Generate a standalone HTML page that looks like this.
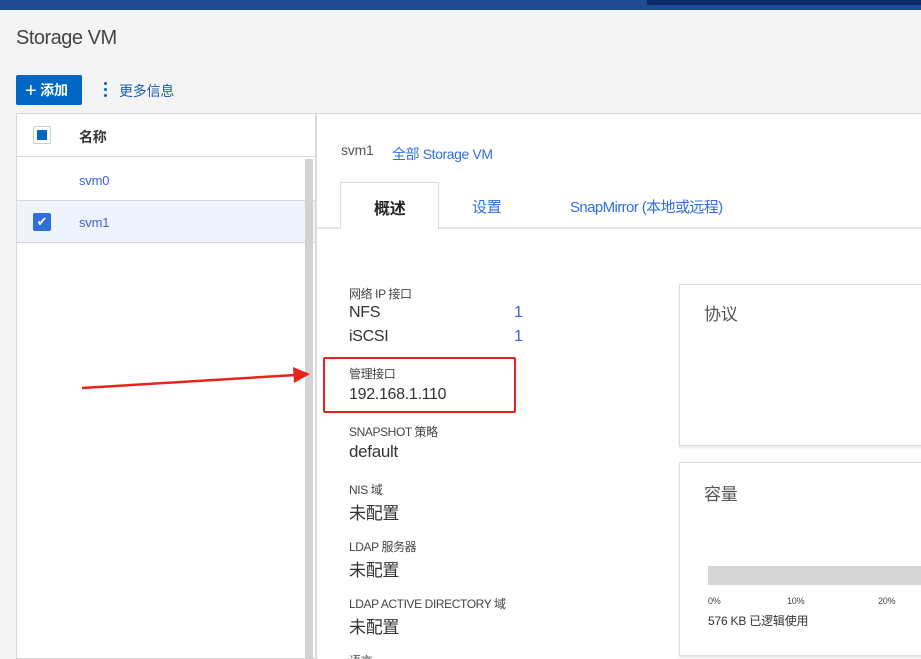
<!DOCTYPE html>
<html><head><meta charset="utf-8"><style>
*{margin:0;padding:0;box-sizing:border-box}
html{height:659px;overflow:hidden}
body{width:921px;height:659px;overflow:hidden;background:#f4f4f4;font-family:"Liberation Sans","Noto Sans CJK SC",sans-serif;position:relative;color:#333;letter-spacing:-0.2px}
.a{position:absolute;white-space:nowrap}
.lbl{font-size:12px;color:#444;letter-spacing:-0.4px}
.val{font-size:16px;color:#333;letter-spacing:-0.3px}
</style></head><body>
<div class="a" style="left:0;top:0;width:921px;height:10px;background:#1f4b91"></div>
<div class="a" style="left:647px;top:0;width:274px;height:5px;background:#0b2a6b"></div>
<div class="a" style="left:16px;top:27px;font-size:20px;color:#444;letter-spacing:-0.5px">Storage VM</div>
<div class="a" style="left:16px;top:75px;width:66px;height:30px;background:#0067c5;border-radius:2px;color:#fff;font-size:14px;font-weight:bold;line-height:30px;padding-left:9px"><span style="font-size:20px;font-weight:normal;vertical-align:-2px">+</span> 添加</div>
<div class="a" style="left:104px;top:82px;width:4px;height:16px">
<div style="width:3px;height:3px;border-radius:50%;background:#0067c5;margin-bottom:3px"></div><div style="width:3px;height:3px;border-radius:50%;background:#0067c5;margin-bottom:3px"></div><div style="width:3px;height:3px;border-radius:50%;background:#0067c5"></div></div>
<div class="a" style="left:119px;top:81px;font-size:14px;color:#1a5fb4">更多信息</div>

<div class="a" style="left:16px;top:113px;width:300px;height:546px;background:#fff;border:1px solid #d8d8d8"></div>
<div class="a" style="left:17px;top:156px;width:298px;height:1px;background:#d8d8d8"></div>
<div class="a" style="left:33px;top:126px;width:18px;height:18px;border:1px solid #ccc;border-radius:2px;background:#fff"></div>
<div class="a" style="left:37px;top:130px;width:10px;height:10px;background:#0067c5"></div>
<div class="a" style="left:79px;top:127px;font-size:14px;font-weight:bold;color:#333">名称</div>
<div class="a" style="left:79px;top:173px;font-size:13px;color:#3d63d6">svm0</div>
<div class="a" style="left:17px;top:200px;width:298px;height:43px;background:#eef3fc;border-top:1px solid #d8d8d8;border-bottom:1px solid #d8d8d8"></div>
<div class="a" style="left:33px;top:213px;width:18px;height:18px;background:#2f6fdc;border-radius:2px;color:#fff;font-size:13px;text-align:center;line-height:18px">✔</div>
<div class="a" style="left:79px;top:215px;font-size:13px;color:#3d63d6">svm1</div>
<div class="a" style="left:305px;top:159px;width:8px;height:500px;background:#d2d2d2"></div>

<div class="a" style="left:316px;top:113px;width:605px;height:546px;background:#fff;border-top:1px solid #d8d8d8;border-left:1px solid #e0e0e0"></div>
<div class="a" style="left:341px;top:142px;font-size:14px;color:#555">svm1</div>
<div class="a" style="left:392px;top:144px;font-size:14px;color:#2f6fdc;letter-spacing:-0.4px">全部 Storage VM</div>
<div class="a" style="left:316px;top:227px;width:605px;height:2px;background:#e4e4e4"></div>
<div class="a" style="left:340px;top:182px;width:99px;height:47px;background:#fff;border:1px solid #ddd;border-bottom:none"></div>
<div class="a" style="left:374px;top:195px;font-size:16px;font-weight:bold;color:#222">概述</div>
<div class="a" style="left:472px;top:196px;font-size:15px;color:#2f6fdc">设置</div>
<div class="a" style="left:570px;top:196px;font-size:15px;color:#2f6fdc;letter-spacing:-0.6px">SnapMirror (本地或远程)</div>

<div class="a lbl" style="left:349px;top:285px">网络 IP 接口</div>
<div class="a val" style="left:349px;top:304px">NFS</div><div class="a val" style="left:514px;top:304px;color:#3d63d6">1</div>
<div class="a val" style="left:349px;top:328px">iSCSI</div><div class="a val" style="left:514px;top:328px;color:#3d63d6">1</div>
<div class="a lbl" style="left:349px;top:365px">管理接口</div>
<div class="a val" style="left:349px;top:386px">192.168.1.110</div>
<div class="a" style="left:323px;top:357px;width:193px;height:56px;border:2px solid #e8231d;border-radius:2px"></div>
<div class="a lbl" style="left:349px;top:423px">SNAPSHOT 策略</div>
<div class="a val" style="left:349px;top:442px;font-size:17px">default</div>
<div class="a lbl" style="left:349px;top:481px">NIS 域</div>
<div class="a val" style="left:349px;top:499px;font-size:17px">未配置</div>
<div class="a lbl" style="left:349px;top:538px">LDAP 服务器</div>
<div class="a val" style="left:349px;top:556px;font-size:17px">未配置</div>
<div class="a lbl" style="left:349px;top:595px">LDAP ACTIVE DIRECTORY 域</div>
<div class="a val" style="left:349px;top:613px;font-size:17px">未配置</div>
<div class="a lbl" style="left:349px;top:652px">语言</div>

<div class="a" style="left:679px;top:284px;width:250px;height:162px;border:1px solid #ddd;box-shadow:0 2px 2px #e6e6e6;background:#fff"></div>
<div class="a" style="left:704px;top:300px;font-size:17px;color:#555">协议</div>
<div class="a" style="left:679px;top:462px;width:250px;height:194px;border:1px solid #ddd;box-shadow:0 2px 2px #e6e6e6;background:#fff"></div>
<div class="a" style="left:704px;top:480px;font-size:17px;color:#555">容量</div>
<div class="a" style="left:708px;top:566px;width:213px;height:19px;background:#d6d6d6"></div>
<div class="a" style="left:708px;top:596px;font-size:9px;color:#444">0%</div>
<div class="a" style="left:787px;top:596px;font-size:9px;color:#444">10%</div>
<div class="a" style="left:878px;top:596px;font-size:9px;color:#444">20%</div>
<div class="a" style="left:708px;top:612px;font-size:12px;color:#333">576 KB 已逻辑使用</div>

<svg class="a" style="left:0;top:0" width="921" height="659"><line x1="82" y1="388" x2="296" y2="375" stroke="#e8231d" stroke-width="2.5"/><polygon points="310,374 293,367 294,383" fill="#e8231d"/></svg>
</body></html>
